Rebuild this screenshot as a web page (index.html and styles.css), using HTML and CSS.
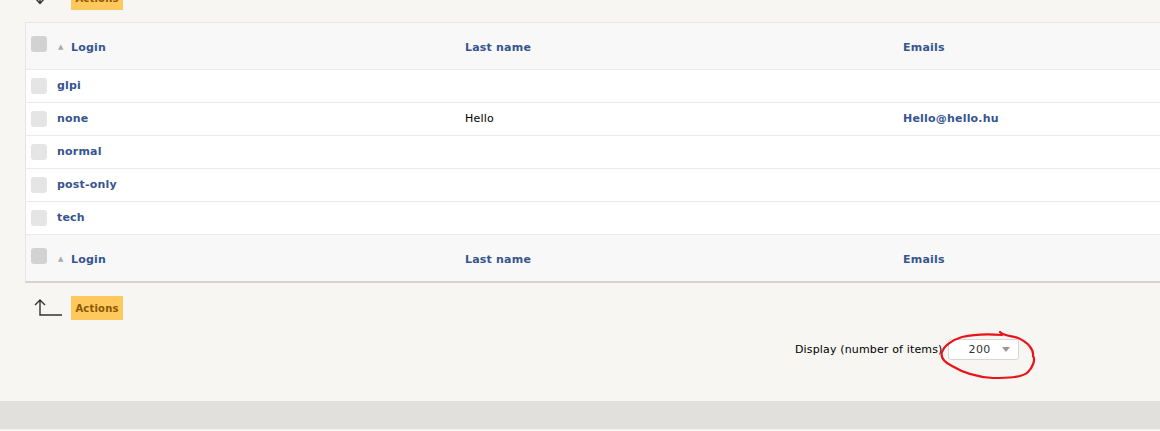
FILE: index.html
```html
<!DOCTYPE html>
<html>
<head>
<meta charset="utf-8">
<link rel="stylesheet" href="styles.css">
</head>
<body>
<div class="page">
  <div class="massive top">
    <svg class="arrow" width="30" height="24" viewBox="0 0 30 24">
      <path d="M8 0 V17 M4 13 L8 17.5 L12 13" fill="none" stroke="#333" stroke-width="1.4"/>
    </svg>
    <span class="btn">Actions</span>
  </div>

  <div class="tab">
    <div class="row head">
      <div class="cell cb"><span class="check dark"></span></div>
      <div class="cell"><span class="sort">&#9650;</span><span class="link">Login</span></div>
      <div class="cell"><span class="link">Last name</span></div>
      <div class="cell"><span class="link">Emails</span></div>
    </div>
    <div class="row">
      <div class="cell cb"><span class="check"></span></div>
      <div class="cell"><span class="link">glpi</span></div>
      <div class="cell"></div>
      <div class="cell"></div>
    </div>
    <div class="row">
      <div class="cell cb"><span class="check"></span></div>
      <div class="cell"><span class="link">none</span></div>
      <div class="cell">Hello</div>
      <div class="cell"><span class="link">Hello@hello.hu</span></div>
    </div>
    <div class="row">
      <div class="cell cb"><span class="check"></span></div>
      <div class="cell"><span class="link">normal</span></div>
      <div class="cell"></div>
      <div class="cell"></div>
    </div>
    <div class="row">
      <div class="cell cb"><span class="check"></span></div>
      <div class="cell"><span class="link">post-only</span></div>
      <div class="cell"></div>
      <div class="cell"></div>
    </div>
    <div class="row">
      <div class="cell cb"><span class="check"></span></div>
      <div class="cell"><span class="link">tech</span></div>
      <div class="cell"></div>
      <div class="cell"></div>
    </div>
    <div class="row head foot">
      <div class="cell cb"><span class="check dark"></span></div>
      <div class="cell"><span class="sort">&#9650;</span><span class="link">Login</span></div>
      <div class="cell"><span class="link">Last name</span></div>
      <div class="cell"><span class="link">Emails</span></div>
    </div>
  </div>

  <div class="massive bottom">
    <svg class="arrow" width="30" height="24" viewBox="0 0 30 24">
      <path d="M8 4 V19 H30 M3 9 L8 4 L13 9" fill="none" stroke="#333" stroke-width="1.4"/>
    </svg>
    <span class="btn">Actions</span>
  </div>

  <div class="pager">
    <span class="label">Display (number of items)</span>
    <span class="select"><span class="val">200</span><span class="caret"></span></span>
  </div>
</div>
<div class="footer"></div>
<div class="footer-line"></div>

<svg class="annot" width="1160" height="431" viewBox="0 0 1160 431">
  <path d="M1000 332 C1004 336, 1012 336, 1018 338 C1028 342, 1034 350, 1033 356 C1036 360, 1032 368, 1028 372 C1022 378, 1005 378, 993 378 C975 377, 962 372, 952 366 C944 362, 940 358, 942 352 C944 346, 952 340, 962 337 C975 334, 990 334, 1002 335" fill="none" stroke="#e8141a" stroke-width="2.2" stroke-linecap="round"/>
</svg>
</body>
</html>
```

FILE: styles.css
```css
html, body {
  margin: 0;
  padding: 0;
}
body {
  background: #f7f6f2;
  font-family: "DejaVu Sans", Verdana, sans-serif;
  font-size: 11px;
  color: #000;
  position: relative;
  width: 1160px;
  height: 431px;
  overflow: hidden;
}
.page {
  height: 401px;
  overflow: hidden;
}
.massive {
  display: flex;
  align-items: center;
  height: 24px;
  padding-left: 32px;
}
.massive .arrow {
  display: block;
  margin-right: 9px;
}
.massive.top {
  margin-top: -14px;
}
.massive.bottom {
  margin-top: 13px;
}
.btn {
  display: inline-flex;
  align-items: center;
  height: 24px;
  width: 52px;
  box-sizing: border-box;
  justify-content: center;
  background: #fec95c;
  color: #8c5705;
  font-weight: bold;
  font-size: 10px;
  letter-spacing: 0.2px;
}
.tab {
  margin-top: 12px;
  margin-left: 25px;
  width: 1200px;
  border: 1px solid #e6e5e1;
  border-bottom: 2px solid #d3d3d1;
  background: #fff;
}
.row {
  display: grid;
  grid-template-columns: 26px 408px 438px 1fr;
  height: 32px;
  border-top: 1px solid #ebebeb;
  align-items: center;
}
.row:first-child {
  border-top: none;
}
.row.head {
  height: 46px;
  background: #f8f8f8;
}
.cell {
  padding-left: 5px;
  display: flex;
  align-items: center;
  white-space: nowrap;
  letter-spacing: 0.2px;
  padding-bottom: 2px;
}
.row.head .cell {
  padding-bottom: 0;
  padding-top: 2px;
}
.row.head .cell.cb {
  padding-top: 0;
}
.cell.cb {
  padding-bottom: 0;
}
.check {
  display: block;
  width: 16px;
  height: 16px;
  border-radius: 3px;
  background: #e5e5e5;
}
.check.dark {
  background: #d2d2d2;
  margin-top: -4px;
}
.link {
  color: #36558f;
  font-weight: bold;
}
.sort {
  font-size: 7px;
  color: #aaa;
  width: 14px;
  padding-left: 1px;
  box-sizing: border-box;
}
.pager {
  display: flex;
  align-items: center;
  margin-top: 19px;
  padding-left: 795px;
}
.label {
  font-size: 11px;
  color: #000;
  letter-spacing: 0.15px;
  margin-right: 5px;
}
.select {
  display: flex;
  align-items: center;
  justify-content: flex-end;
  width: 71px;
  height: 21px;
  box-sizing: border-box;
  border: 1px solid #d6d6d6;
  border-radius: 3px;
  background: #fff;
  padding-right: 8px;
}
.val {
  color: #333;
  font-size: 11px;
  margin-right: 11px;
  letter-spacing: 0.3px;
}
.caret {
  width: 0;
  height: 0;
  border-left: 4px solid transparent;
  border-right: 4px solid transparent;
  border-top: 5px solid #999;
}
.footer {
  height: 28px;
  background: #e1e0dc;
}
.footer-line {
  height: 2px;
  background: #f4f4f1;
}
.annot {
  position: absolute;
  left: 0;
  top: 0;
  pointer-events: none;
}
```
